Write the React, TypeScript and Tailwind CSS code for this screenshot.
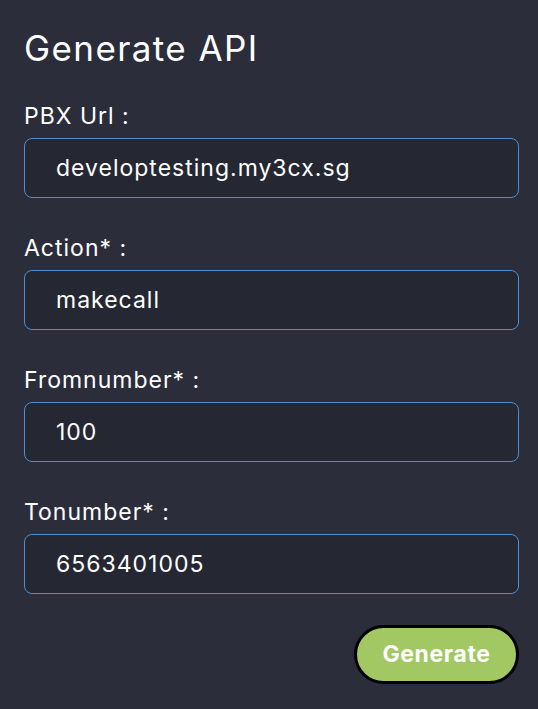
import React from "react";

const fields = [
  { label: "PBX Url :", value: "developtesting.my3cx.sg" },
  { label: "Action* :", value: "makecall" },
  { label: "Fromnumber* :", value: "100" },
  { label: "Tonumber* :", value: "6563401005" },
];

export default function App() {
  return (
    <div
      className="w-[538px] h-[709px] bg-[#2b2d3a] text-white pl-6 pr-[19px] pt-[27px]"
      style={{ fontFamily: "Inter, 'Open Sans', sans-serif" }}
    >
      <h1 className="text-[35px] leading-[42px] font-normal tracking-[1.4px]">Generate API</h1>
      <div className="flex flex-col gap-[36px] mt-[33px]">
        {fields.map((f) => (
          <div key={f.label} className="flex flex-col">
            <label className="text-[23px] leading-[28px] tracking-[1px]">{f.label}</label>
            <div className="mt-[8px] h-[60px] w-full rounded-[8px] border border-[#4d8fd0] bg-[#252732] flex items-center pl-[31px] text-[23px] tracking-[1px]">
              {f.value}
            </div>
          </div>
        ))}
      </div>
      <div className="flex justify-end mt-[31px]">
        <button className="h-[59px] w-[165px] rounded-full border-[3px] border-black bg-[#a2c864] text-white font-bold text-[23px] tracking-[0.6px]">
          Generate
        </button>
      </div>
    </div>
  );
}
